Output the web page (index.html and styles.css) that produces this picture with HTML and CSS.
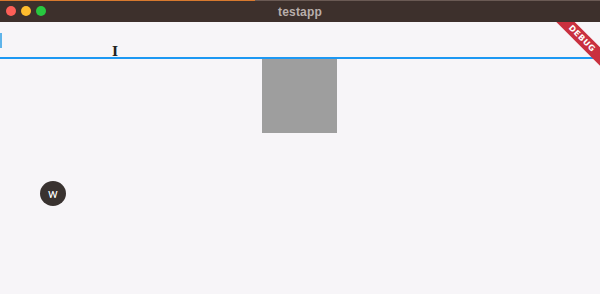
FILE: index.html
```html
<!DOCTYPE html>
<html>
<head>
    <title>testapp</title>
    <link rel="stylesheet" href="styles.css">
</head>
<body>
    <div class="window">
        <div class="titlebar">
            <div class="lights">
                <span class="light red"></span>
                <span class="light yellow"></span>
                <span class="light green"></span>
            </div>
            <div class="title">testapp</div>
        </div>
        <div class="content">
            <div class="field">
                <span class="caret"></span>
                <span class="ibeam">I</span>
            </div>
            <div class="box"></div>
            <div class="avatar">w</div>
            <div class="banner">DEBUG</div>
        </div>
    </div>
</body>
</html>
```

FILE: styles.css
```css
html, body {
    margin: 0;
    padding: 0;
}
body {
    width: 600px;
    height: 294px;
    overflow: hidden;
    background: #f7f5f8;
    font-family: "Liberation Sans", Arial, sans-serif;
}
.window {
    display: flex;
    flex-direction: column;
    height: 294px;
}
.titlebar {
    position: relative;
    height: 22px;
    background: #3d302c;
    border-top: 1px solid #d8792e;
    border-image: linear-gradient(to right, #d8792e 255px, #6a5a54 255px) 1;
    box-sizing: border-box;
    display: flex;
    align-items: center;
    justify-content: center;
}
.lights {
    position: absolute;
    left: 6px;
    top: 5px;
    display: flex;
    gap: 5px;
}
.light {
    width: 10px;
    height: 10px;
    border-radius: 50%;
}
.red { background: #fe5f57; }
.yellow { background: #febc2e; }
.green { background: #28c840; }
.title {
    color: #b9aeab;
    font-size: 12px;
    font-weight: bold;
    letter-spacing: 0.2px;
}
.content {
    position: relative;
    flex: 1;
    overflow: hidden;
}
.field {
    position: relative;
    height: 35px;
    border-bottom: 2px solid #1d98f3;
}
.caret {
    position: absolute;
    left: 0;
    top: 11px;
    width: 2px;
    height: 15px;
    background: #5fb4ea;
}
.ibeam {
    position: absolute;
    left: 112px;
    top: 23px;
    font-family: "DejaVu Serif", serif;
    font-size: 13px;
    font-weight: bold;
    line-height: 13px;
    color: #222;
}
.box {
    width: 75px;
    height: 74px;
    margin-left: 262px;
    background: #9e9e9e;
}
.avatar {
    width: 26px;
    height: 25px;
    margin: 48px 0 0 40px;
    border-radius: 50%;
    background: #393230;
    color: #fff;
    font-family: "Roboto", sans-serif;
    font-size: 13px;
    display: flex;
    align-items: center;
    justify-content: center;
}
.banner {
    position: absolute;
    left: 530px;
    top: 10px;
    width: 104px;
    height: 13px;
    background: #c9303f;
    color: #fff;
    font-family: "DejaVu Sans", sans-serif;
    font-size: 8px;
    font-weight: bold;
    line-height: 13px;
    text-align: center;
    letter-spacing: 0.5px;
    transform: rotate(45deg);
}
```
